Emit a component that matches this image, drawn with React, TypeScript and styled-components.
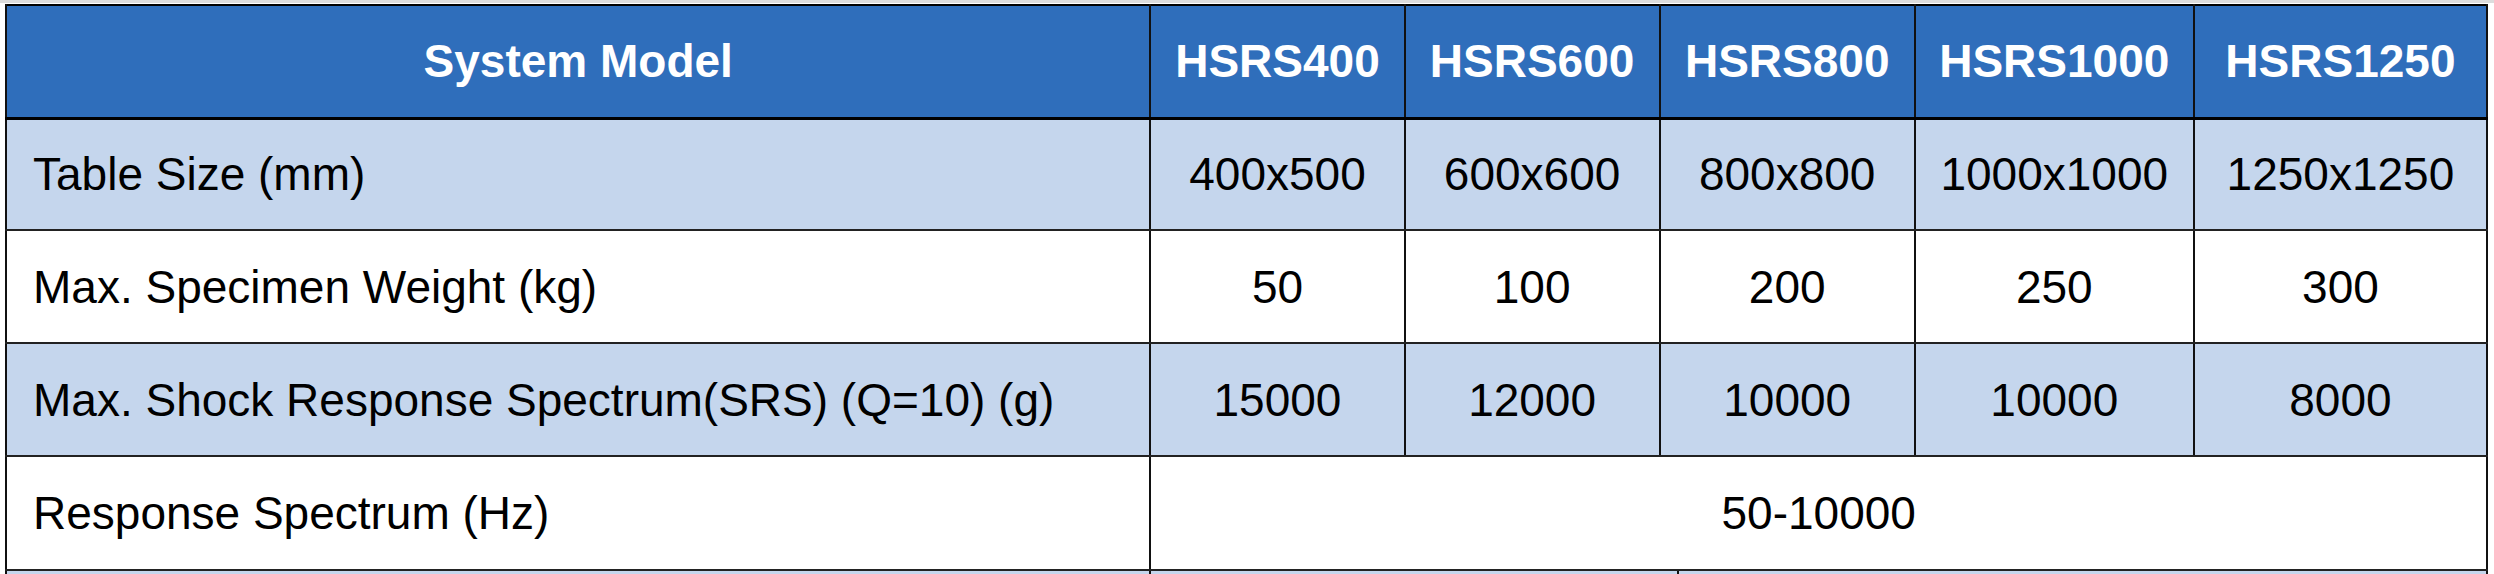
import React, { FC } from "react";
import styled, { createGlobalStyle } from "styled-components";

const GlobalStyle = createGlobalStyle`
  html, body {
    margin: 0;
    padding: 0;
    background: #ffffff;
  }
  body {
    font-family: "Liberation Sans", Arial, sans-serif;
    overflow: hidden;
  }
`;

const Page = styled.div`
  border-top: 3px solid #dcdcdc;
  padding: 1px 0 0 5px;
`;

const SpecTable = styled.table`
  border-collapse: collapse;
  table-layout: fixed;
  width: 2483px;
  border-top: 2px solid #000;
  border-left: 2px solid #1a1a1a;
  border-right: 2px solid #1a1a1a;
`;

const HeadRow = styled.tr`
  height: 113px;
  background: #2f6ebb;
`;

const HeadCell = styled.th`
  border-left: 2px solid #111;
  border-right: 2px solid #111;
  border-bottom: 3px solid #000;
  color: #ffffff;
  font-weight: bold;
  font-size: 46px;
  text-align: center;
  vertical-align: middle;
  padding: 0;
  white-space: nowrap;
`;

const Row = styled.tr<{ $shade: boolean; $height: number }>`
  height: ${(props) => props.$height}px;
  background: ${(props) => (props.$shade ? "#c5d6ed" : "#ffffff")};
`;

const Cell = styled.td<{ $label?: boolean }>`
  border: 2px solid #222;
  border-left-color: #111;
  border-right-color: #111;
  font-size: 46px;
  color: #000;
  text-align: ${(props) => (props.$label ? "left" : "center")};
  padding: ${(props) => (props.$label ? "0 0 0 26px" : "0")};
  vertical-align: middle;
  white-space: nowrap;
`;

const SplitCell = styled.td`
  border: 2px solid #222;
  border-right-color: #111;
  padding: 0;
`;

const SplitInner = styled.div`
  display: grid;
  grid-template-columns: 526px 1fr;
  height: 111px;
`;

const SplitPart = styled.div`
  & + & {
    border-left: 2px solid #111;
  }
`;

const models = ["HSRS400", "HSRS600", "HSRS800", "HSRS1000", "HSRS1250"];
const widths = [1144, 254, 255, 255, 279, 293];

type SpecRow = {
  label: string;
  values: string[];
  height: number;
};

const rows: SpecRow[] = [
  {
    label: "Table Size (mm)",
    values: ["400x500", "600x600", "800x800", "1000x1000", "1250x1250"],
    height: 112,
  },
  {
    label: "Max. Specimen Weight (kg)",
    values: ["50", "100", "200", "250", "300"],
    height: 113,
  },
  {
    label: "Max. Shock Response Spectrum(SRS) (Q=10) (g)",
    values: ["15000", "12000", "10000", "10000", "8000"],
    height: 113,
  },
];

const App: FC = () => {
  return (
    <Page>
      <GlobalStyle />
      <SpecTable>
        <colgroup>
          {widths.map((w, i) => (
            <col key={i} style={{ width: w }} />
          ))}
        </colgroup>
        <thead>
          <HeadRow>
            <HeadCell>System Model</HeadCell>
            {models.map((m) => (
              <HeadCell key={m}>{m}</HeadCell>
            ))}
          </HeadRow>
        </thead>
        <tbody>
          {rows.map((r, i) => (
            <Row key={r.label} $shade={i % 2 === 0} $height={r.height}>
              <Cell $label>{r.label}</Cell>
              {r.values.map((v, j) => (
                <Cell key={j}>{v}</Cell>
              ))}
            </Row>
          ))}
          <Row $shade={false} $height={114}>
            <Cell $label>Response Spectrum (Hz)</Cell>
            <Cell colSpan={5}>50-10000</Cell>
          </Row>
          <Row $shade={true} $height={113}>
            <Cell $label></Cell>
            <SplitCell colSpan={5}>
              <SplitInner>
                <SplitPart />
                <SplitPart />
              </SplitInner>
            </SplitCell>
          </Row>
        </tbody>
      </SpecTable>
    </Page>
  );
};

export default App;
